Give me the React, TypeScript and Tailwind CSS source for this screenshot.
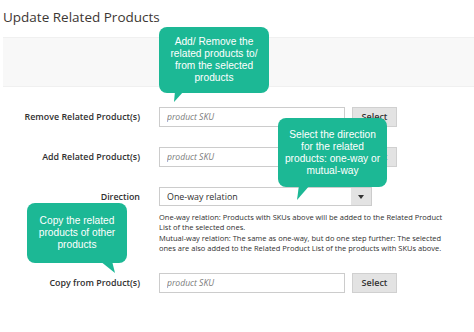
import React from "react";

const OS = { fontFamily: '"Open Sans", "Liberation Sans", sans-serif' };

function Bubble({
  left,
  top,
  width,
  height,
  lines,
  tail,
}: {
  left: number;
  top: number;
  width: number;
  height: number;
  lines: string[];
  tail: string;
}) {
  return (
    <div
      className="absolute"
      style={{ left, top, width, height }}
    >
      <div className="absolute inset-0 rounded-[8px] bg-[#1cb895] flex flex-col items-center justify-center text-white text-[10.2px] leading-[12px] text-center font-['Liberation_Sans',Arial,sans-serif]">
        {lines.map((l) => (
          <div key={l} className="whitespace-nowrap">{l}</div>
        ))}
      </div>
      <svg
        className="absolute left-0 top-0 overflow-visible"
        width={width}
        height={height}
      >
        <polygon points={tail} fill="#1cb895" />
      </svg>
    </div>
  );
}

function Row({
  label,
  button = true,
}: {
  label: string;
  button?: boolean;
}) {
  return (
    <div className="flex items-center h-[20px]">
      <div className="w-[140px] text-right text-[8.9px] font-semibold text-[#303030] whitespace-nowrap">
        {label}
      </div>
      <input
        className="ml-[19px] w-[186px] h-[20px] border border-[#cccccc] bg-white pl-[7px] text-[8.6px] outline-none placeholder:italic placeholder:text-[#7a7a7a]"
        placeholder="product SKU"
        style={OS}
      />
      {button && (
        <div className="ml-[7px] w-[45px] h-[20px] border border-[#d0d0d0] bg-[#e3e3e3] flex items-center justify-center text-[9px] font-semibold text-[#333]">
          Select
        </div>
      )}
    </div>
  );
}

export default function App() {
  return (
    <div
      className="relative w-[474px] h-[332px] bg-white overflow-hidden text-[#303030]"
      style={OS}
    >
      <div className="pl-[3px] pt-[7px] text-[13.5px] leading-[20px] text-[#3d3733]">
        Update Related Products
      </div>
      <div className="mt-[10px] ml-[3px] h-[50px] bg-[#f8f8f8] border-t border-b border-[#f0f0f0]" />

      <div className="mt-[20px]">
        <Row label="Remove Related Product(s)" />
        <div className="mt-[20px]">
          <Row label="Add Related Product(s)" />
        </div>
        <div className="mt-[20px] flex items-center h-[19px]">
          <div className="w-[140px] text-right text-[8.9px] font-semibold text-[#303030]">
            Direction
          </div>
          <div className="ml-[19px] w-[213px] h-[19px] border border-[#cccccc] bg-white flex items-stretch">
            <div className="flex-1 flex items-center pl-[7px] text-[8.9px] text-[#303030]">
              One-way relation
            </div>
            <div className="w-[20px] bg-[#e3e3e3] flex items-center justify-center">
              <svg width="6" height="4" viewBox="0 0 6 4">
                <polygon points="0,0 6,0 3,4" fill="#333" />
              </svg>
            </div>
          </div>
        </div>
        <div className="mt-[6px] ml-[159px] text-[7.5px] leading-[10.4px] text-[#303030] whitespace-nowrap">
          <div>One-way relation: Products with SKUs above will be added to the Related Product</div>
          <div>List of the selected ones.</div>
          <div>Mutual-way relation: The same as one-way, but do one step further: The selected</div>
          <div>ones are also added to the Related Product List of the products with SKUs above.</div>
        </div>
        <div className="mt-[19px]">
          <Row label="Copy from Product(s)" />
        </div>
      </div>

      <Bubble
        left={159}
        top={27}
        width={110}
        height={66}
        lines={["Add/ Remove the", "related products to/", "from the selected", "products"]}
        tail="16,64 25,64 15,75"
      />
      <Bubble
        left={278}
        top={118}
        width={109}
        height={69}
        lines={["Select the direction", "for the related", "products: one-way or", "mutual-way"]}
        tail="21,67 32,67 19,82"
      />
      <Bubble
        left={27}
        top={203}
        width={100}
        height={60}
        lines={["Copy the related", "products of other", "products"]}
        tail="73,58 85,58 88,70"
      />
    </div>
  );
}
